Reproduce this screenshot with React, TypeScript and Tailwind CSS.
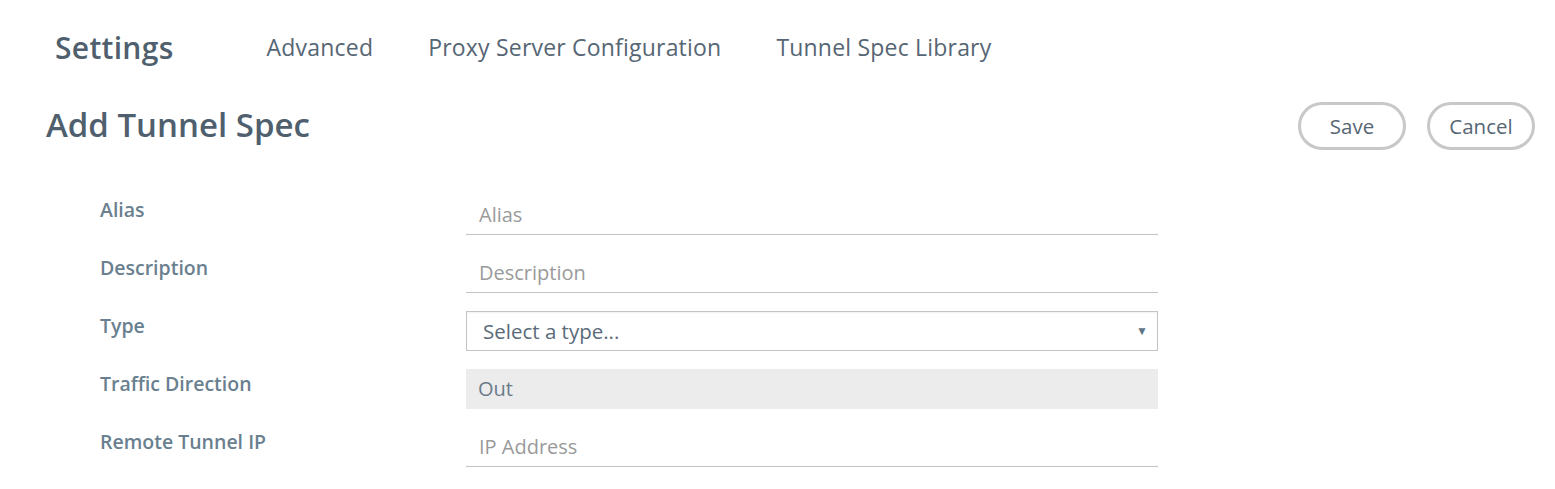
const font = { fontFamily: '"Open Sans", "Liberation Sans", sans-serif' };

function Row({ label, children }: { label: string; children: React.ReactNode }) {
  return (
    <div className="flex items-start">
      <div className="w-[366px] text-[19.5px] font-semibold text-[#6a7f8f]">{label}</div>
      <div className="w-[692px]">{children}</div>
    </div>
  );
}

export default function App() {
  return (
    <div className="min-h-screen bg-white text-[#4f5f6e]" style={font}>
      {/* Tabs */}
      <nav className="flex items-center pl-[55px] pt-[25px] h-[70px]">
        <span className="text-[30px] font-semibold tracking-[0.3px] text-[#4f5f6e] mr-[93px]">Settings</span>
        <div className="flex items-center gap-[55px] text-[23px] tracking-[0.2px] text-[#566674]">
          <span>Advanced</span>
          <span>Proxy Server Configuration</span>
          <span>Tunnel Spec Library</span>
        </div>
      </nav>

      {/* Header */}
      <div className="flex items-center justify-between pl-[46px] pr-[20px] pt-[32px]">
        <h1 className="text-[33px] leading-[40px] font-semibold text-[#4f5f6e] -mt-[3px]">Add Tunnel Spec</h1>
        <div className="flex gap-[21px]">
          <button className="w-[108px] h-[48px] rounded-full border-[3px] border-[#c8c8c8] text-[20.5px] text-[#566674]">
            Save
          </button>
          <button className="w-[108px] h-[48px] rounded-full border-[3px] border-[#c8c8c8] text-[20.5px] text-[#566674]">
            Cancel
          </button>
        </div>
      </div>

      {/* Form */}
      <div className="flex flex-col gap-[18px] pl-[100px] pt-[45px]">
        <Row label="Alias">
          <input
            placeholder="Alias"
            className="w-full h-[40px] px-[13px] text-[20px] border-b border-[#c4c4c4] outline-none placeholder:text-[#9a9a9a]"
          />
        </Row>
        <Row label="Description">
          <input
            placeholder="Description"
            className="w-full h-[40px] px-[13px] text-[20px] border-b border-[#c4c4c4] outline-none placeholder:text-[#9a9a9a]"
          />
        </Row>
        <Row label="Type">
          <div className="flex items-center justify-between h-[40px] pl-[16px] pr-[9px] border border-[#c4c4c4] shadow-[inset_0_1px_2px_rgba(0,0,0,0.06)] text-[20.5px] text-[#5a6b7a]">
            <span>Select a type...</span>
            <span className="text-[12px] text-[#5f7585]">▼</span>
          </div>
        </Row>
        <Row label="Traffic Direction">
          <div className="flex items-center h-[40px] px-[12px] bg-[#ececec] text-[20px] text-[#6a7b89]">Out</div>
        </Row>
        <Row label="Remote Tunnel IP">
          <input
            placeholder="IP Address"
            className="w-full h-[40px] px-[13px] text-[20px] border-b border-[#c4c4c4] outline-none placeholder:text-[#9a9a9a]"
          />
        </Row>
      </div>
    </div>
  );
}
